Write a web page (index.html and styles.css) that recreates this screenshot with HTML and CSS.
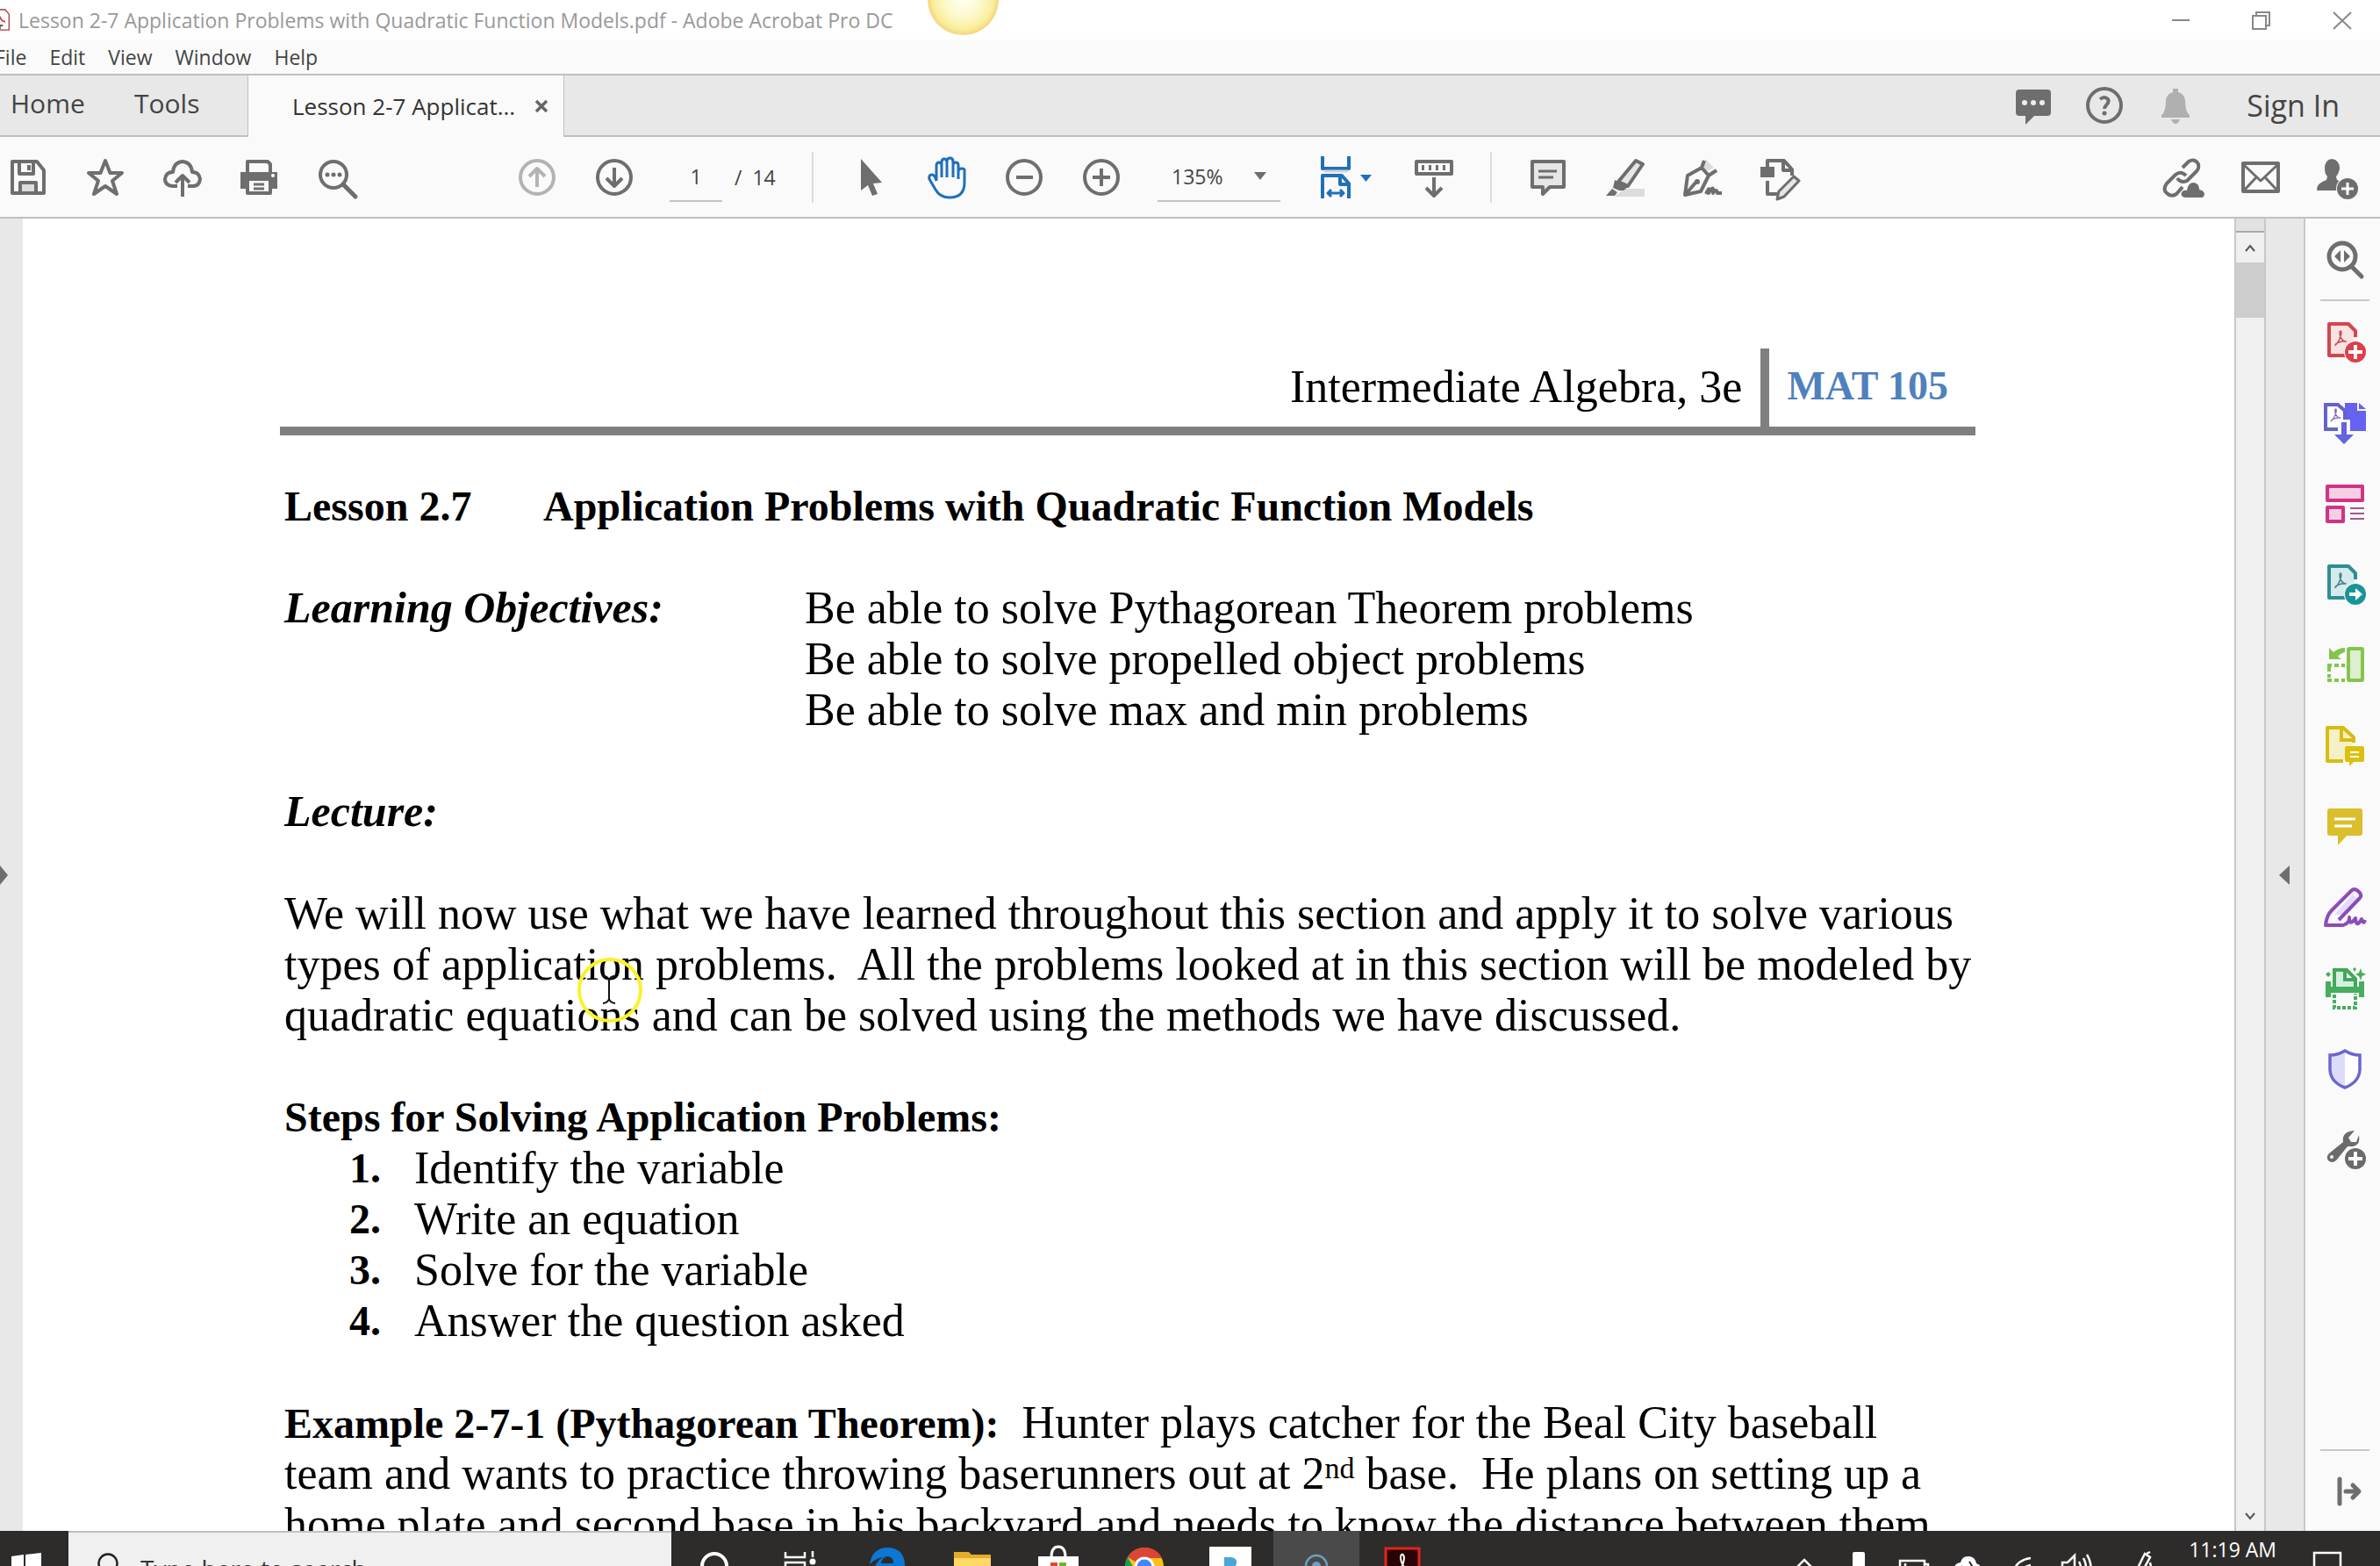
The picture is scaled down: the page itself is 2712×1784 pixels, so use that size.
FILE: index.html
```html
<!DOCTYPE html>
<html lang="en">
<head>
<meta charset="utf-8">
<title>Lesson 2-7 Application Problems with Quadratic Function Models.pdf - Adobe Acrobat Pro DC</title>
<link rel="stylesheet" href="styles.css">
</head>
<body>
<svg class="defs" aria-hidden="true">
  <symbol id="swirl" viewBox="0 0 16 20"><path d="M1.500 17.500C4 16 7 11 8.500 5.500 9.200 2.500 8.800 1 8 1S6.800 2.500 7.300 5.500C8.300 9.500 11 13 14.500 13.500M1.500 17.500C3 14.500 8 12.800 14.500 12.500" fill="none" stroke="currentColor" stroke-width="1.600"/></symbol>
</svg>

<header class="titlebar">
  <svg class="appicon" viewBox="0 0 14 30"><path d="M-4 1H7L12 7V28H-4" fill="#fff" stroke="#a8383b" stroke-width="1.500"/><path d="M-1 9C1 14 3 17 7 17" fill="none" stroke="#d32f36" stroke-width="2"/><path d="M0 21V27M0 22H4" stroke="#333" stroke-width="1.500"/></svg>
  <span class="title">Lesson 2-7 Application Problems with Quadratic Function Models.pdf - Adobe Acrobat Pro DC</span>
  <div class="controls">
    <button class="ic" aria-label="Minimize"><svg viewBox="0 0 48 40"><path d="M14 20H34" stroke="#888" stroke-width="2"/></svg></button>
    <button class="ic" aria-label="Restore"><svg viewBox="0 0 48 40"><path d="M14 15H29V30H14ZM18 15V11H33V26H29" fill="none" stroke="#888" stroke-width="2"/></svg></button>
    <button class="ic" aria-label="Close"><svg viewBox="0 0 48 40"><path d="M14 11L34 30M34 11L14 30" stroke="#888" stroke-width="2"/></svg></button>
  </div>
  <div class="orb"></div>
</header>

<nav class="menubar">
  <button>File</button><button>Edit</button><button>View</button><button>Window</button><button>Help</button>
</nav>

<div class="tabs">
  <button class="home">Home</button>
  <button class="tools">Tools</button>
  <div class="tab"><span>Lesson 2-7 Applicat...</span><button aria-label="Close tab"><svg viewBox="0 0 16 16"><path d="M2 2L14 14M14 2L2 14" stroke="#666" stroke-width="3.500"/></svg></button></div>
  <div class="account">
    <button class="ic" aria-label="Messages"><svg viewBox="0 0 48 48"><path d="M8 6H40Q44 6 44 10V32Q44 36 40 36H25L15 46V36H8Q4 36 4 32V10Q4 6 8 6Z" fill="#6e6e6e"/><g fill="#eee"><circle cx="14" cy="21" r="3"/><circle cx="24" cy="21" r="3"/><circle cx="34" cy="21" r="3"/></g></svg></button>
    <button class="ic" aria-label="Help"><svg viewBox="0 0 48 48"><circle cx="24" cy="24" r="19" fill="none" stroke="#6e6e6e" stroke-width="4"/><path d="M19 17Q24 13 28 17C31 22 24 23 24 28" fill="none" stroke="#6e6e6e" stroke-width="4"/><circle cx="24" cy="33" r="2.500" fill="#6e6e6e"/></svg></button>
    <button class="ic" aria-label="Notifications"><svg viewBox="0 0 48 48"><path d="M21 5H27V9Q34 11 35 18Q35 32 40 35V38H8V35Q13 32 13 18Q14 11 21 9ZM19 40H29Q27 45 24 45T19 40Z" fill="#b0b0b0"/></svg></button>
    <button class="signin">Sign In</button>
  </div>
</div>

<div class="toolbar">
  <button class="ic" aria-label="Save"><svg viewBox="0 0 48 48"><path d="M16 42V30H32V42" fill="#dcdcdc"/><path d="M6 6H34L42 16V42H6ZM14 6V20H30V6M15 42V30H33V42" class="s"/><path d="M25 10V16" class="s"/></svg></button>
  <button class="ic" aria-label="Star"><svg viewBox="0 0 48 48"><path d="M24 5L29.500 19H43L32 28L37 43L24 34L11 43L16 28L5 19H18.500Z" class="s"/></svg></button>
  <button class="ic" aria-label="Upload"><svg viewBox="0 0 48 48"><path d="M18 34H12Q4 33 4 26 5 18 13 18 14 7 24 6 34 7 35 18 43 18 44 26 43 34 36 34H30" class="s"/><path d="M24 46V23M16 30L24 22L32 30" class="s"/></svg></button>
  <button class="ic" aria-label="Print"><svg viewBox="0 0 48 48"><path d="M2 18H44V37H38V28H8V37H2Z" fill="#6e6e6e"/><path d="M10 18V6H33L36 9V18M10 28V42H36V28" class="s"/><path d="M17 32H29M17 37H29" class="s thin"/><circle cx="39" cy="22" r="2" fill="#fff"/></svg></button>
  <button class="ic" aria-label="Search"><svg viewBox="0 0 48 48"><circle cx="20" cy="21" r="15" class="s"/><path d="M31 32L45 46" class="s fat"/><g fill="#6e6e6e"><circle cx="13" cy="21" r="2.500"/><circle cx="20" cy="21" r="2.500"/><circle cx="27" cy="21" r="2.500"/></g></svg></button>
  <button class="ic pager" aria-label="Previous page"><svg viewBox="0 0 48 48"><g opacity=".5"><circle cx="25" cy="24" r="19" class="s"/><path d="M25 35V15M16 23L25 14L34 23" class="s"/></g></svg></button>
  <button class="ic" aria-label="Next page"><svg viewBox="0 0 48 48"><circle cx="25" cy="24" r="19" class="s"/><path d="M25 13V33M16 25L25 34L34 25" class="s"/></svg></button>
  <div class="pages"><input type="text" id="page" value="1" aria-label="Page number"><label for="page">/ &nbsp;14</label></div>
  <div class="sep"></div>
  <button class="ic" aria-label="Select"><svg viewBox="0 0 48 48"><path d="M14 3L38 30L28 31L33 43L27 45L22 33L14 39Z" fill="#6e6e6e"/></svg></button>
  <button class="ic" aria-label="Hand"><svg viewBox="0 0 48 48"><path d="M12 29V12Q12 8 15 8T18 12V8Q18 4 21 4T24 8V7Q24 3 27.500 3T31 7V11Q31 8 34 8T37 11V18Q37 15 41 15T44 18V31Q44 48 27 48 16 48 11 39L4 27Q3 22 7 22 10 22 12 29M18 12V25M24 8V25M31 10V25M37 17V27" class="s blue thin" transform="translate(0 -1)"/></svg></button>
  <button class="ic" aria-label="Zoom out"><svg viewBox="0 0 48 48"><circle cx="24" cy="24" r="19" class="s"/><path d="M15 24H34" class="s"/></svg></button>
  <button class="ic" aria-label="Zoom in"><svg viewBox="0 0 48 48"><circle cx="24" cy="24" r="19" class="s"/><path d="M14 24H34M24 14V34" class="s"/></svg></button>
  <div class="zoom"><select aria-label="Zoom level"><option>135%</option></select><svg viewBox="0 0 14 9"><path d="M0 0H14L7 9Z" fill="#6e6e6e"/></svg></div>
  <button class="ic fit" aria-label="Fit width"><svg viewBox="0 0 71 48"><path d="M8 0V14H38V0M8 48V22H30L38 31V48M28 22V32H38" class="s blue"/><path d="M14 42H32M18 38L14 42L18 46M28 38L32 42L28 46" class="s blue thin"/><path d="M10 17H37" stroke="#d4d4d4" stroke-width="3"/><path d="M51 21H64L57.500 29Z" fill="#1f70b8"/></svg></button>
  <button class="ic" aria-label="Page display"><svg viewBox="0 0 48 48"><rect x="4" y="6" width="40" height="14" class="s"/><path d="M10 13H38" stroke="#6e6e6e" stroke-width="6" stroke-dasharray="3 5"/><path d="M24 24V43M15 36L24 45L33 36" class="s"/></svg></button>
  <div class="sep"></div>
  <button class="ic" aria-label="Comment"><svg viewBox="0 0 48 48"><path d="M6 6H42V35H26L18 43V35H6Z" class="s light"/><path d="M13 17H34M13 24H30" class="s thin"/></svg></button>
  <button class="ic" aria-label="Highlight"><svg viewBox="0 0 48 48"><path d="M23 37H46V46H12Z" fill="#dcdcdc"/><path d="M36 5L44 9L27 34L16 29Z" class="s light"/><path d="M12 27L27 35L22 39H17L10 36ZM9 37L15 41L12 45H2Z" fill="#6e6e6e"/></svg></button>
  <button class="ic" aria-label="Sign"><svg viewBox="0 0 48 48"><path d="M27 3L37 13L29 17L24 12Z" fill="#dcdcdc"/><path d="M26 5L23 13L7 22L4 44 22 40 31 22 40 16M23 13L31 22M5 43L17 29M28 43Q33 32 31 42 37 31 36 42 40 36 41 42H46" class="s"/><circle cx="18" cy="29" r="3" fill="#6e6e6e"/></svg></button>
  <button class="ic" aria-label="Edit"><svg viewBox="0 0 48 48"><path d="M2 12H18V24H2Z" fill="#6e6e6e"/><path d="M10 12V5H29L38 15V22M28 5V16H38M10 28V43H21" class="s"/><path d="M40 23L46 28L29 46L21 49L23 40Z" class="s thin light"/></svg></button>
  <div class="share">
    <button class="ic" aria-label="Share link"><svg viewBox="0 0 48 48"><path d="M22 12L29 5Q36 1 40 8 41 13 38 16L27 27Q20 30 16 24M26 21Q20 15 14 20L4 30Q-1 37 4 41 9 46 15 42L22 34" class="s" transform="translate(1 1)"/><path d="M26 47Q20 46 22 41 24 38 28 39 29 30 36 30 42 31 42 38 48 39 48 44L46 47Z" fill="#6e6e6e"/></svg></button>
    <button class="ic" aria-label="Email"><svg viewBox="0 0 48 48"><path d="M4 8H44V40H4Z" class="s"/><path d="M5 10L24 28L43 10M5 39L19 24M43 39L29 24" class="s thin"/></svg></button>
    <button class="ic" aria-label="Add people"><svg viewBox="0 0 48 48"><path d="M9 14Q9 4 17 3 26 4 26 14 25 20 22 23L23 27Q31 29 24 39H0Q-1 31 11 27L12 23Q9 20 9 14Z" fill="#6e6e6e"/><circle cx="35" cy="37" r="13" fill="#fafafa"/><circle cx="35" cy="37" r="12" fill="#6e6e6e"/><path d="M28 37H42M35 30V44" stroke="#fff" stroke-width="3"/></svg></button>
  </div>
</div>

<div class="workspace">
  <button class="leftrail" aria-label="Show navigation pane"><svg viewBox="0 0 9 22"><path d="M0 0L9 11L0 22Z" fill="#6e6e6e"/></svg></button>
  <main class="viewer">
    <article class="doc">
      <div class="runhead"><span class="course">Intermediate Algebra, 3e</span><strong>MAT 105</strong></div>
      <div class="text">
        <h1><span class="num">Lesson 2.7</span>Application Problems with Quadratic Function Models</h1>
        <section class="objectives">
          <h2><em>Learning Objectives:</em></h2>
          <p>Be able to solve Pythagorean Theorem problems<br>Be able to solve propelled object problems<br>Be able to solve max and min problems</p>
        </section>
        <h2><em>Lecture:</em></h2>
        <p>We will now use what we have learned throughout this section and apply it to solve various<br>types of application problems.&nbsp; All the problems looked at in this section will be modeled by<br>quadratic equations and can be solved using the methods we have discussed.</p>
        <h2 class="tight">Steps for Solving Application Problems:</h2>
        <ol>
          <li>Identify the variable</li>
          <li>Write an equation</li>
          <li>Solve for the variable</li>
          <li>Answer the question asked</li>
        </ol>
        <p><strong>Example 2-7-1 (Pythagorean Theorem):</strong>&nbsp; Hunter plays catcher for the Beal City baseball<br>team and wants to practice throwing baserunners out at 2<sup>nd</sup> base.&nbsp; He plans on setting up a<br>home plate and second base in his backyard and needs to know the distance between them</p>
      </div>
    </article>
    <svg class="pointer" viewBox="0 0 76 76"><circle cx="38" cy="38" r="35" fill="none" stroke="#fbf12c" stroke-width="4"/><path d="M30 22Q36 22 37 27 38 22 44 22M37 26V49M30 53Q36 52 37 48 38 52 44 53" fill="none" stroke="#111" stroke-width="2"/></svg>
  </main>
  <div class="scroll">
    <div class="split"></div>
    <button aria-label="Scroll up"><svg viewBox="0 0 12 9"><path d="M1 8L6 2L11 8" fill="none" stroke="#555" stroke-width="2"/></svg></button>
    <div class="thumb"></div>
    <button class="down" aria-label="Scroll down"><svg viewBox="0 0 12 9"><path d="M1 1L6 7L11 1" fill="none" stroke="#555" stroke-width="2"/></svg></button>
  </div>
  <button class="rightrail" aria-label="Hide tools pane"><svg viewBox="0 0 12 22"><path d="M12 0V22L0 11Z" fill="#6e6e6e"/></svg></button>
  <aside class="panel">
    <button class="ic" aria-label="Search tools"><svg viewBox="0 0 48 48"><circle cx="21" cy="21" r="15" class="s fat"/><path d="M32 33L43 44" class="s fat"/><path d="M19 14V28L12 21ZM23 14V28L30 21Z" fill="#6e6e6e"/></svg></button>
    <hr>
    <div class="tasks">
      <button class="ic" aria-label="Create PDF"><svg viewBox="0 0 48 48" color="#bf545a"><path d="M24 39H6V3H28L36 11V18" fill="#fbe3e2" stroke="#d2474f" stroke-width="4" stroke-linejoin="round"/><use href="#swirl" x="11" y="10" width="16" height="20"/><circle cx="36" cy="35" r="13" fill="#fafafa"/><circle cx="36" cy="35" r="12" fill="#dc4049"/><path d="M28 35H44M36 27V43" stroke="#fff" stroke-width="4"/></svg></button>
      <button class="ic" aria-label="Export PDF"><svg viewBox="0 0 48 48" color="#8071b0"><path d="M24 1H38V10H48V33H30V20H24Z" fill="#6462ee"/><path d="M16 31H2V3H16L24 10V20" fill="#fff" stroke="#6563c8" stroke-width="4"/><use href="#swirl" x="6" y="7" width="15" height="17"/><path d="M40 1L48 8H40Z" fill="#6462ee"/><path d="M18 21H30V36H18Z" fill="#fafafa"/><path d="M20 23H26V37H34L23 48L12 37H20Z" fill="#6563dd"/></svg></button>
      <button class="ic" aria-label="Organize pages"><svg viewBox="0 0 48 48"><g fill="#f5cfe5" stroke="#d13484" stroke-width="4" stroke-linejoin="round"><rect x="4" y="4" width="40" height="16"/><rect x="4" y="28" width="18" height="16"/></g><path d="M30 29H46M30 35H46M30 41H46" stroke="#9d5b8a" stroke-width="2"/></svg></button>
      <button class="ic" aria-label="Send"><svg viewBox="0 0 48 48" color="#42858b"><path d="M24 39H6V3H28L36 11V18" fill="#d5ebeb" stroke="#2f8e91" stroke-width="4" stroke-linejoin="round"/><use href="#swirl" x="11" y="10" width="16" height="20"/><circle cx="36" cy="35" r="13" fill="#fafafa"/><circle cx="36" cy="35" r="12" fill="#179596"/><path d="M29 33H36V28L44 35L36 42V37H29Z" fill="#fff"/></svg></button>
      <button class="ic" aria-label="Crop"><svg viewBox="0 0 48 48"><rect x="28" y="5" width="16" height="36" rx="1" fill="#deeed0" stroke="#84c44c" stroke-width="4"/><path d="M6 4L11 9Q17 4 24 4V9Q19 10 16 14L20 17H6Z" fill="#84c44c"/><path d="M4 24H24M6 26V38M4 41H24" fill="none" stroke="#84c44c" stroke-width="4" stroke-dasharray="5 3"/></svg></button>
      <button class="ic" aria-label="Review"><svg viewBox="0 0 48 48"><path d="M22 41H4V3H22L34 14V20" fill="#f6f0c6" stroke="#d9bc12" stroke-width="4" stroke-linejoin="round"/><path d="M20 4V17H33" fill="none" stroke="#d9bc12" stroke-width="4"/><path d="M26 24H44Q46 24 46 26V40Q46 42 44 42H34L29 47V42H26Q24 42 24 40V26Q24 24 26 24Z" fill="#dcc010"/><path d="M30 31H40M30 36H40" stroke="#fff" stroke-width="2"/></svg></button>
      <button class="ic" aria-label="Comment"><svg viewBox="0 0 48 48"><path d="M7 3H41Q44 3 44 6V31Q44 34 41 34H26L16 45V34H7Q4 34 4 31V6Q4 3 7 3Z" fill="#dabe2b"/><path d="M12 15H36M12 23H32" stroke="#fff" stroke-width="3"/></svg></button>
      <button class="ic" aria-label="Fill and sign"><svg viewBox="0 0 48 48"><path d="M12 32L33 9L38 13L20 32Z" fill="#e6daf8"/><path d="M17 38L41 13Q44 10 40 6 35 1 31 5L9 27Q3 33 2 44H22Q30 41 29 35 29 46 36 36 37 48 43 37 45 44 47 38" fill="none" stroke="#8b4cbb" stroke-width="4" stroke-linejoin="round"/></svg></button>
      <button class="ic" aria-label="Scan"><svg viewBox="0 0 48 48"><path d="M12 22V3H26L36 13V22M24 3V14H36" fill="#d8efdf" stroke="#3faa57" stroke-width="4"/><path d="M2 16H8V22H40V16H46V34H40V29H8V34H2Z" fill="#46ae5e"/><path d="M12 31V46H36V30" fill="none" stroke="#46ae5e" stroke-width="4" stroke-dasharray="4 2"/><path d="M42 1L43.500 6 48 8 43.500 10 42 15 40 10 36 8 40 6ZM5 5L8 8L5 11L2 8ZM35 0L37 2L35 5L33 2Z" fill="#46ae5e"/></svg></button>
      <button class="ic" aria-label="Protect"><svg viewBox="0 0 48 48"><path d="M24 3Q32 8 41 8V25Q40 39 24 45Q8 39 7 25V8Q16 8 24 3Z" fill="#fff"/><path d="M24 3V45Q8 39 7 25V8Q16 8 24 3Z" fill="#dddcf8"/><path d="M24 3Q32 8 41 8V25Q40 39 24 45Q8 39 7 25V8Q16 8 24 3Z" fill="none" stroke="#6c66cf" stroke-width="3.500"/></svg></button>
      <button class="ic" aria-label="More tools"><svg viewBox="0 0 48 48"><path d="M35 2L28 10L31 15H37L40 7Q42 18 34 20H27L14 36Q9 40 5 36 2 32 6 28L22 15Q20 3 35 2Z" fill="#6b6b6b"/><circle cx="9" cy="32" r="2" fill="#fff"/><circle cx="36" cy="34" r="13" fill="#fafafa"/><circle cx="36" cy="34" r="12" fill="#6b6b6b"/><path d="M28 34H44M36 26V42" stroke="#fff" stroke-width="4"/></svg></button>
    </div>
    <hr class="foot">
    <button class="ic expand" aria-label="Collapse"><svg viewBox="0 0 48 48"><path d="M18 10V38M25 24H39M33 17L40 24L33 31" class="s fat"/></svg></button>
  </aside>
</div>

<footer class="taskbar">
  <div class="taskrow">
    <button class="start" aria-label="Start"><svg viewBox="0 0 34 34"><path d="M0 4L14 2V16H0ZM16 2L34 0V16H16ZM0 18H14V32L0 30ZM16 18H34V34L16 32Z" fill="#fff"/></svg></button>
    <label class="search"><svg viewBox="0 0 30 36"><circle cx="17" cy="12" r="10.500" fill="none" stroke="#222" stroke-width="2.500"/><path d="M10 20L1 34" stroke="#222" stroke-width="2.500"/></svg><input type="search" placeholder="Type here to search"></label>
    <div class="apps">
      <button aria-label="Cortana"><svg viewBox="0 0 48 52"><circle cx="24" cy="24" r="14" fill="none" stroke="#fff" stroke-width="4"/></svg></button>
      <button aria-label="Task view"><svg viewBox="0 0 48 52"><path d="M7 8V14H29V8M7 40V20H29V40M38 7V14M38 24V40" fill="none" stroke="#fff" stroke-width="2.500"/><circle cx="38" cy="19" r="3.500" fill="#fff"/></svg></button>
      <button aria-label="Edge"><svg viewBox="0 0 48 52"><path d="M5 22Q8 3 26 3 45 4 45 24V28H18Q20 38 30 38 38 38 43 35V43Q34 47 26 46 11 44 10 29 11 20 20 14 12 15 5 22ZM18 21H32Q32 13 25 13 19 14 18 21Z" fill="#0a78d4"/></svg></button>
      <button aria-label="File Explorer"><svg viewBox="0 0 48 52"><path d="M3 8H20L23 11H45V42H3Z" fill="#e4ad29"/><path d="M3 15H45V42H3Z" fill="#ffd868"/></svg></button>
      <button aria-label="Store"><svg viewBox="0 0 48 52"><path d="M16 14Q16 2 24 2T32 14" fill="none" stroke="#fff" stroke-width="3"/><path d="M1 13H47V46H1Z" fill="#fff"/><path d="M15 20H23V27H15Z" fill="#e8452c"/><path d="M25 20H33V27H25Z" fill="#6bb81c"/><path d="M15 29H23V36H15Z" fill="#1ba1e2"/><path d="M25 29H33V36H25Z" fill="#fcb813"/></svg></button>
      <button aria-label="Chrome"><svg viewBox="0 0 48 52"><circle cx="24" cy="25" r="22" fill="#fbc116"/><path d="M24 25L5 14Q12 3 24 3 38 3 44 15H24Z" fill="#db4437"/><path d="M5 14L16 34 24 47Q2 47 2 25 2 19 5 14Z" fill="#129d58"/><circle cx="24" cy="25" r="10" fill="#4285f4" stroke="#fff" stroke-width="3"/></svg></button>
      <button aria-label="Notes"><svg viewBox="0 0 48 52"><path d="M0 2H48V50H0Z" fill="#fff"/><path d="M17 14H25Q32 15 31 21 30 26 24 28V40H17Z" fill="#4aa6d6"/></svg></button>
      <button class="active" aria-label="Recorder"><svg viewBox="0 0 48 52"><circle cx="24" cy="24" r="12" fill="none" stroke="#6aa3bf" stroke-width="2.500"/><circle cx="24" cy="24" r="5" fill="#6aa3bf"/></svg></button>
      <button aria-label="Acrobat"><svg viewBox="0 0 48 52"><path d="M5 4H43V46H5Z" fill="#2a0405" stroke="#e1251b" stroke-width="3"/><path d="M12 38C20 34 26 22 26 14 25 9 22 10 22 15 23 24 30 31 37 31 30 29 18 33 12 38Z" fill="none" stroke="#fff" stroke-width="2"/></svg></button>
    </div>
    <div class="tray">
      <svg viewBox="0 0 48 52"><path d="M15 26L24 17L33 26" fill="none" stroke="#fff" stroke-width="2.500"/></svg>
      <svg viewBox="0 0 48 52"><rect x="17" y="8" width="14" height="36" rx="2" fill="#fff"/></svg>
      <svg viewBox="0 0 48 52"><path d="M9 18H37V34H9ZM15 21V34M37 22H41V30" fill="none" stroke="#fff" stroke-width="2.500"/></svg>
      <svg viewBox="0 0 48 52"><path d="M8 28Q9 21 16 20 18 12 26 13 33 14 34 21 40 23 40 29 39 35 32 35H14Q8 34 8 28Z" fill="#fff"/><path d="M17 24L24 31M26 19L31 27" stroke="#2d2c2b" stroke-width="2"/></svg>
      <svg viewBox="0 0 48 52"><path d="M14 31Q18 17 34 15M20 35Q23 25 34 23M26 38Q28 31 34 30" fill="none" stroke="#fff" stroke-width="2.500"/></svg>
      <svg viewBox="0 0 48 52"><path d="M8 20H14L22 12V40L14 32H8ZM27 19Q31 26 27 33M32 15Q38 26 32 37M36 11Q45 26 36 41" fill="none" stroke="#fff" stroke-width="2.500"/></svg>
    </div>
    <svg class="pen" viewBox="0 0 48 52"><path d="M14 34L26 10L32 14L19 38ZM28 10L32 8M32 20L34 30" fill="none" stroke="#fff" stroke-width="2.500"/></svg>
    <time>11:19 AM</time>
    <svg class="notes" viewBox="0 0 48 52"><path d="M9 9H39V36H30L22 44V36H9Z" fill="none" stroke="#fff" stroke-width="2.500"/></svg>
  </div>
</footer>
</body>
</html>
```

FILE: styles.css
```css
* { box-sizing: border-box; }

body {
  margin: 0;
  height: 100vh;
  display: flex;
  flex-direction: column;
  overflow: hidden;
  background: #fafafa;
  color: #444;
  font: 23px "Open Sans", "Noto Sans", sans-serif;
}

button, input, select {
  margin: 0;
  padding: 0;
  border: 0;
  background: none;
  color: inherit;
  font: inherit;
}

svg { display: block; }
.defs { position: absolute; width: 0; height: 0; }

.ic { width: 48px; flex: none; }
.ic svg { width: 100%; overflow: visible; }
.s { fill: none; stroke: #6e6e6e; stroke-width: 4; stroke-linejoin: round; }
.thin { stroke-width: 3; }
.fat { stroke-width: 5; stroke-linecap: round; }
.blue { stroke: #1f70b8; }
.light { fill: #e6e6e6; }

/* Window title */
.titlebar {
  position: relative;
  flex: none;
  height: 45px;
  display: flex;
  align-items: center;
  gap: 9px;
  padding-right: 19px;
  background: #fff;
  color: #999;
}
.appicon { width: 12px; height: 28px; }
.controls { display: flex; gap: 44px; margin-left: auto; }
.orb {
  position: absolute;
  left: 1057px;
  top: -41px;
  width: 81px;
  height: 81px;
  border-radius: 50%;
  background: radial-gradient(circle closest-side, #fffff4 0, #fcf9cc 50%, #faee9c 84%, #f5d47e 100%);
}

.menubar {
  flex: none;
  height: 39px;
  display: flex;
  align-items: center;
  gap: 26px;
  margin-left: -6px;
}

/* Tabs */
.tabs {
  flex: none;
  height: 72px;
  display: flex;
  border-top: 2px solid #c0c0c0;
  background: #e8e8e8;
  font-size: 30px;
}
.tabs > * { border-bottom: 2px solid #c0c0c0; }
.home, .tools { padding-bottom: 6px; text-align: left; }
.home { width: 153px; padding-left: 12px; }
.tools { width: 129px; }
.tabs .tab {
  width: 361px;
  display: flex;
  align-items: center;
  justify-content: space-between;
  padding: 0 17px 0 50px;
  border: 1px solid #c0c0c0;
  border-width: 0 1px;
  background: #fafafa;
  color: #333;
  font-size: 26px;
}
.tab svg { width: 16px; }
.account {
  flex: 1;
  display: flex;
  align-items: center;
  justify-content: flex-end;
  gap: 33px;
  padding-right: 46px;
}
.signin { margin-left: 24px; font-size: 34px; }

/* Toolbar */
.toolbar {
  flex: none;
  height: 93px;
  display: flex;
  align-items: center;
  gap: 40px;
  padding: 0 24px 0 8px;
  border-bottom: 2px solid #c0c0c0;
}
.pager { margin-left: 139px; }
.pages { width: 122px; display: flex; align-items: center; gap: 14px; white-space: nowrap; }
.pages input, .zoom {
  width: 60px;
  height: 56px;
  border-bottom: 2px solid #c4c4c4;
  text-align: center;
}
.sep { width: 2px; height: 58px; background: #dcdcdc; }
.zoom { width: 140px; display: flex; align-items: center; padding: 0 16px; justify-content: space-between; }
.zoom select { appearance: none; }
.zoom svg { width: 14px; }
.fit { width: 71px; }
.share { display: flex; gap: 40px; margin-left: auto; }

/* Document area */
.workspace {
  flex: 1;
  min-height: 0;
  display: grid;
  grid-template-columns: 26px minmax(0, 1fr) 36px 45px 85px;
}
.leftrail, .rightrail { display: flex; align-items: center; background: #e8e8e8; }
.leftrail svg { width: 9px; }
.rightrail { padding-left: 15px; border-right: 2px solid #c8c8c8; }
.rightrail svg { width: 12px; }

.viewer { position: relative; overflow: hidden; background: #fff; }
.pointer { position: absolute; left: 631px; top: 841px; width: 76px; }

.doc {
  max-width: 2225px;
  padding: 148px 0 0 293px;
  color: #000;
  font: 52px/58px "Liberation Serif", serif;
}
.runhead {
  display: flex;
  justify-content: flex-end;
  border-bottom: 10px solid #7f7f7f;
}
.runhead > * { height: 89px; padding-top: 15px; }
.course { padding-right: 21px; border-right: 10px solid #7f7f7f; }
.runhead strong { padding: 14px 31px 0 20px; color: #4f81bd; font-size: 46px; }
.text { padding: 52px 0 0 5px; white-space: nowrap; }
.text p, .text h1, .text h2, .text ol { margin: 0 0 58px; }
.text h1, .text h2 { font-size: 48px; line-height: 58px; }
.text em { font-size: 50px; line-height: 1; }
.text h2.tight { margin: 0; }
.text strong { font-size: 48px; line-height: 1; }
.num { display: inline-block; width: 295px; }
.objectives { display: flex; }
.objectives h2 { width: 593px; }
.text ol { padding-left: 74px; list-style: none; counter-reset: step; }
.text li { display: flex; counter-increment: step; }
.text li::before { content: counter(step) "."; width: 74px; font-size: 48px; font-weight: bold; }
.text sup { font-size: 34px; line-height: 0; vertical-align: 12px; }

.scroll {
  display: flex;
  flex-direction: column;
  border: 2px solid #c8c8c8;
  border-width: 0 2px;
  background: #f0f0f0;
}
.split { height: 16px; border-bottom: 2px solid #aaa; background: #e2e2e2; }
.scroll button { height: 34px; padding: 0 10px; }
.thumb { height: 63px; background: #cdcdcd; }
.scroll .down { margin-top: auto; }

.panel {
  display: flex;
  flex-direction: column;
  align-items: center;
  padding: 22px 0 21px 4px;
}
.panel hr { width: 56px; margin: 22px 0 23px; border: 0; border-top: 2px solid #c8c8c8; }
.tasks { display: grid; gap: 44px; }
.panel hr.foot { margin: auto 0 22px; }

/* Windows taskbar, its lower half lies below the screen edge */
.taskbar { flex: none; height: 40px; overflow: hidden; background: #2e2c2b; }
.taskrow { height: 84px; display: flex; align-items: center; color: #fff; }
.start { width: 78px; padding-left: 13px; }
.start svg { width: 34px; }
.search {
  width: 687px;
  height: 84px;
  display: flex;
  align-items: center;
  gap: 24px;
  padding-left: 28px;
  border-top: 2px solid #c0c0c0;
  background: #f0f0f0;
  color: #333;
  font-size: 28px;
}
.search svg { width: 30px; }
.search input { flex: 1; }
.search input::placeholder { color: #333; opacity: 1; }
.apps { display: flex; align-self: stretch; }
.apps button { width: 98px; padding: 0 25px; }
.apps .active { background: #4b4a4a; }
.tray { display: flex; gap: 14px; margin-left: auto; }
.tray svg, .pen, .notes { width: 48px; }
.pen { margin: 0 28px; }
.taskrow time { align-self: flex-start; padding-top: 5px; font-size: 23px; }
.notes { margin: 0 36px 0 34px; }
```
